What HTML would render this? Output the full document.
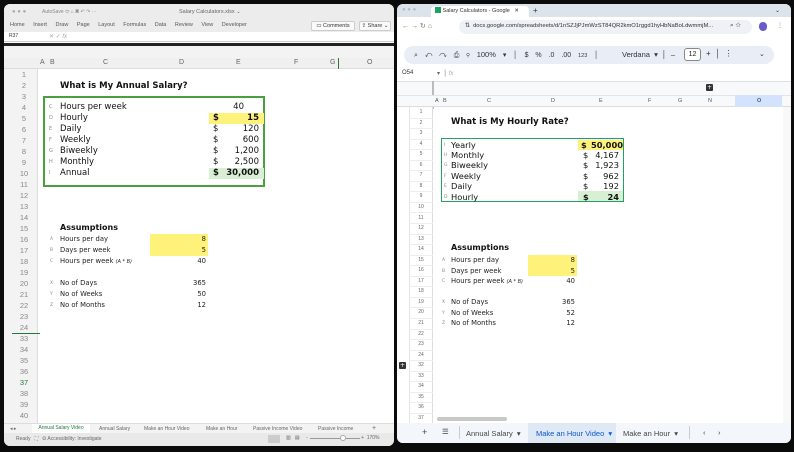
<!DOCTYPE html>
<html><head><meta charset="utf-8"><style>
*{margin:0;padding:0;box-sizing:border-box}
body{width:794px;height:452px;background:#0b0b0b;position:relative;overflow:hidden;font-family:"DejaVu Sans","Liberation Sans",sans-serif;color:#222}
.a{position:absolute;white-space:nowrap}
.t{font-family:"Liberation Sans",sans-serif}
.rn{position:absolute;text-align:center;color:#777;font-family:"Liberation Sans",sans-serif}
</style></head><body>

<!-- LEFT WINDOW -->
<div class="a" style="left:4px;top:4px;width:390px;height:442px;background:#fff;border-radius:6px;overflow:hidden">
 <div class="a" style="left:0;top:0;width:390px;height:38px;background:#ececec"></div>
 <div class="a t" style="left:8px;top:5px;font-size:6px;color:#aaa">● ● ●</div>
 <div class="a t" style="left:38px;top:5px;font-size:5px;color:#888">AutoSave ⬭ ⌂ ▣ ↶ ↷ ⋯</div>
 <div class="a t" style="left:175px;top:5px;font-size:5.5px;color:#666">Salary Calculators.xlsx ⌄</div>
 <div class="a t" style="left:6px;top:18px;font-size:5.5px;color:#555;word-spacing:7px">Home Insert Draw <span>Page&nbsp;Layout</span> Formulas Data Review View Developer</div>
 <div class="a t" style="left:307px;top:17px;width:44px;height:10px;border:1px solid #ccc;border-radius:2px;font-size:5.5px;color:#333;text-align:center;line-height:8px;background:#fafafa">▭ Comments</div>
 <div class="a t" style="left:355px;top:17px;width:32px;height:10px;border:1px solid #ccc;border-radius:2px;font-size:5.5px;color:#333;text-align:center;line-height:8px;background:#fafafa">⇪ Share ⌄</div>
 <div class="a" style="left:0;top:28px;width:390px;height:10px;background:#fff;border-bottom:1px solid #ccc"></div>
 <div class="a t" style="left:5px;top:29px;font-size:5px;color:#333">R37</div>
 <div class="a t" style="left:45px;top:29px;font-size:6px;color:#aaa">✕ ✓ <i>fx</i></div>
 <div class="a" style="left:0;top:39px;width:390px;height:3px;background:#222"></div>
 <div class="a" style="left:0;top:42px;width:390px;height:12px;background:#f3f3f3"></div>
 <!-- col header -->
 <div class="a" style="left:0;top:54px;width:390px;height:11px;background:#f0f0f0;border-bottom:1px solid #ddd"></div>
 <div class="a" style="left:0;top:65px;width:34px;height:360px;background:#f3f3f3;border-right:1px solid #ddd"></div>
 <div class="a" style="left:0;top:54px;width:390px;height:11px;font-size:7px;color:#666;font-family:'Liberation Sans',sans-serif">
  <span class="a" style="left:36px;top:1px">A</span><span class="a" style="left:46px;top:1px">B</span>
  <span class="a" style="left:99px;top:1px">C</span><span class="a" style="left:175px;top:1px">D</span>
  <span class="a" style="left:232px;top:1px">E</span><span class="a" style="left:290px;top:1px">F</span>
  <span class="a" style="left:326px;top:1px">G</span><span class="a" style="left:363px;top:1px">O</span>
  <span class="a" style="left:334px;top:0;width:1px;height:11px;background:#1f7a3b"></span>
 </div>
 <div id="lrows"></div>
 <!-- content -->
 <div class="a" style="left:56px;top:77px;font-size:8.5px;font-weight:bold;color:#111">What is My Annual Salary?</div>
 <div class="a" style="left:39px;top:92px;width:222px;height:91px;border:2px solid #4aa03f"></div>
 <div class="a" style="left:205px;top:109px;width:55px;height:11px;background:#fff27a"></div>
 <div class="a" style="left:205px;top:164px;width:55px;height:11px;background:#d9efd3"></div>
 <div id="lbox"></div>
 <div class="a" style="left:56px;top:219px;font-size:8px;font-weight:bold;color:#111">Assumptions</div>
 <div class="a" style="left:146px;top:230px;width:58px;height:22px;background:#fff27a"></div>
 <div id="lass"></div>
 <!-- tabs -->
 <div class="a t" style="left:0;top:419px;width:390px;height:10px;background:#f3f3f3;border-top:1px solid #ddd;font-size:5px;color:#666">
  <span class="a" style="left:6px;top:2px">◂ ▸</span>
  <span class="a" style="left:28px;top:0;width:58px;height:10px;background:#fff;color:#1f7a3b;text-align:center;line-height:9px;border-bottom:1px solid #1f7a3b">Annual Salary Video</span>
  <span class="a" style="left:95px;top:2px">Annual Salary</span>
  <span class="a" style="left:140px;top:2px">Make an Hour Video</span>
  <span class="a" style="left:202px;top:2px">Make an Hour</span>
  <span class="a" style="left:249px;top:2px">Passive Income Video</span>
  <span class="a" style="left:314px;top:2px">Passive Income</span>
  <span class="a" style="left:368px;top:1px;font-size:7px">+</span>
 </div>
 <div class="a t" style="left:0;top:429px;width:390px;height:13px;background:#e9e9e9;font-size:5px;color:#666">
  <span class="a" style="left:12px;top:3px">Ready &nbsp; ⛶ &nbsp; ⚇ Accessibility: Investigate</span>
  <span class="a" style="left:264px;top:2px;width:12px;height:8px;background:#ccc"></span>
  <span class="a" style="left:282px;top:2px">▥ &nbsp; ▤</span>
  <span class="a" style="left:306px;top:5px;width:50px;height:1px;background:#999"></span>
  <span class="a" style="left:336px;top:2px;width:6px;height:6px;border-radius:3px;background:#fff;border:1px solid #aaa"></span>
  <span class="a" style="left:302px;top:2px">-</span><span class="a" style="left:357px;top:2px">+ &nbsp;170%</span>
 </div>
</div>

<!-- RIGHT WINDOW -->
<div class="a" style="left:397px;top:4px;width:394px;height:439px;background:#fff;border-radius:6px;overflow:hidden">
 <div class="a" style="left:0;top:0;width:394px;height:13px;background:#dde3ea"></div>
 <div class="a t" style="left:5px;top:3px;font-size:6px;color:#bbb">● ● ●</div>
 <div class="a t" style="left:34px;top:2px;width:98px;height:11px;background:#fff;border-radius:4px 4px 0 0;font-size:5.5px;color:#333;line-height:10px;padding-left:4px"><span style="display:inline-block;width:6px;height:6px;background:#1ea362;vertical-align:-1px"></span> Salary Calculators - Google &nbsp;&nbsp;✕</div>
 <div class="a t" style="left:136px;top:2px;font-size:8px;color:#333">+</div>
 <div class="a t" style="left:378px;top:3px;font-size:6px;color:#333">⌄</div>
 <div class="a" style="left:0;top:13px;width:394px;height:21px;background:#fff"></div>
 <div class="a t" style="left:5px;top:18px;font-size:7px;color:#777">← → ↻ ⌂</div>
 <div class="a" style="left:62px;top:16px;width:293px;height:14px;background:#eef1f5;border-radius:7px"></div>
 <div class="a t" style="left:68px;top:19px;font-size:5.8px;color:#333">⇅ &nbsp;docs.google.com/spreadsheets/d/1nSZJjPJmWzST84QR2kmO1rggd1hyHbNaBoLdwmmjM...</div>
 <div class="a t" style="left:333px;top:18px;font-size:6.5px;color:#444">⌕ ☆</div>
 <div class="a" style="left:362px;top:18px;width:8px;height:9px;border-radius:4px;background:#6a5acd"></div>
 <div class="a t" style="left:380px;top:18px;font-size:6px;color:#777">⋮</div>
 <div class="a" style="left:7px;top:42px;width:370px;height:18px;background:#e9eef6;border-radius:9px"></div>
 <div class="a t" style="left:17px;top:46px;font-size:7px;color:#333;word-spacing:5px">⌕ ↶ ↷ ⎙ ⚲ <span style="font-size:7.5px">100%</span> ▾ │ $ % .0 .00 <span style="font-size:5.5px">123</span> │</div>
 <div class="a t" style="left:225px;top:46px;font-size:7.5px;color:#333">Verdana &nbsp;▾ &nbsp;│ &nbsp;–</div>
 <div class="a t" style="left:287px;top:44px;width:17px;height:13px;border:1px solid #888;border-radius:3px;background:#fff;font-size:7px;text-align:center;line-height:11px">12</div>
 <div class="a t" style="left:309px;top:45px;font-size:8px;color:#333">+ &nbsp;│ &nbsp;⋮</div>
 <div class="a t" style="left:362px;top:46px;font-size:7px;color:#333">⌄</div>
 <div class="a t" style="left:5px;top:66px;font-size:6px;color:#333">O54</div>
 <div class="a t" style="left:40px;top:66px;font-size:6px;color:#666">▾ &nbsp;│ <i style="color:#aaa">fx</i></div>
 <div class="a" style="left:0;top:77px;width:394px;height:14px;background:#f8f9fa;border-top:1px solid #e0e0e0"></div>
 <div class="a" style="left:35px;top:77px;width:1.5px;height:28px;background:#bbb"></div>
 <div class="a" style="left:309px;top:80px;width:7px;height:7px;background:#333;border-radius:1px;color:#fff;font-size:6px;line-height:7px;text-align:center">+</div>
 <div class="a" style="left:0;top:91px;width:394px;height:12px;background:#f8f9fa;border-bottom:1px solid #ddd;border-top:1px solid #e4e4e4"></div>
 <div class="a" style="left:338px;top:91px;width:47px;height:12px;background:#d3e3fd"></div>
 <div class="a t" style="left:0;top:91px;width:394px;height:12px;font-size:5.5px;color:#555">
  <span class="a" style="left:38px;top:3px">A</span><span class="a" style="left:46px;top:3px">B</span>
  <span class="a" style="left:90px;top:3px">C</span><span class="a" style="left:154px;top:3px">D</span>
  <span class="a" style="left:202px;top:3px">E</span><span class="a" style="left:251px;top:3px">F</span>
  <span class="a" style="left:281px;top:3px">G</span><span class="a" style="left:311px;top:3px">N</span>
  <span class="a" style="left:360px;top:3px;font-weight:bold">O</span>
 </div>
 <div class="a" style="left:12px;top:103px;width:24px;height:316px;background:#fff;border-left:1px solid #e4e4e4;border-right:1px solid #ddd"></div>
 <div class="a" style="left:2px;top:358px;width:7px;height:7px;background:#333;border-radius:1px;color:#fff;font-size:6px;line-height:7px;text-align:center">+</div>
 <div id="rrows"></div>
 <div class="a" style="left:54px;top:113px;font-size:8.5px;font-weight:bold;color:#111">What is My Hourly Rate?</div>
 <div class="a" style="left:44px;top:134px;width:183px;height:64px;border:1.5px solid #1ea362"></div>
 <div class="a" style="left:181px;top:136px;width:45px;height:10px;background:#fff27a"></div>
 <div class="a" style="left:181px;top:187px;width:45px;height:10px;background:#d9efd3"></div>
 <div id="rbox"></div>
 <div class="a" style="left:54px;top:239px;font-size:8px;font-weight:bold;color:#111">Assumptions</div>
 <div class="a" style="left:131px;top:251px;width:49px;height:21px;background:#fff27a"></div>
 <div id="rass"></div>
 <div class="a" style="left:386px;top:103px;width:8px;height:316px;background:#f8f8f8"></div>
 <div class="a" style="left:40px;top:413px;width:70px;height:4px;background:#c8c8c8;border-radius:2px"></div>
 <div class="a t" style="left:0;top:419px;width:394px;height:20px;background:#f3f6fb;font-size:7.5px;color:#444">
  <span class="a" style="left:25px;top:4px;font-size:9px">+</span>
  <span class="a" style="left:45px;top:4px">☰</span>
  <span class="a" style="left:62px;top:3px;width:1px;height:13px;background:#ccc"></span>
  <span class="a" style="left:69px;top:6px">Annual Salary &nbsp;▾</span>
  <span class="a" style="left:131px;top:0;width:88px;height:20px;background:#dfe8f5;color:#0b57d0;padding:6px 0 0 8px">Make an Hour Video &nbsp;▾</span>
  <span class="a" style="left:226px;top:6px">Make an Hour &nbsp;▾</span>
  <span class="a" style="left:292px;top:3px;width:1px;height:13px;background:#ccc"></span>
  <span class="a" style="left:306px;top:5px">‹ &nbsp;&nbsp;&nbsp;&nbsp; ›</span>
 </div>
</div>

<script>
function add(id,h){document.getElementById(id).outerHTML=h;}
// left rows
var s='',nums=[];for(var i=1;i<=24;i++)nums.push(i);for(i=33;i<=41;i++)nums.push(i);
nums.forEach(function(n,k){var y=65+k*11;s+='<div class="rn" style="left:8px;top:'+y+'px;width:24px;font-size:7.5px;line-height:11px;color:'+(n==37?'#1f7a3b':'#888')+'">'+n+'</div>';});
s+='<div class="a" style="left:8px;top:329px;width:28px;height:1px;background:#1f7a3b"></div>';
add('lrows',s);
var L=[['C','Hours per week','','40',0],['D','Hourly','$','15',1],['E','Daily','$','120',0],['F','Weekly','$','600',0],['G','Biweekly','$','1,200',0],['H','Monthly','$','2,500',0],['I','Annual','$','30,000',1]];
s='';L.forEach(function(r,k){var y=98+k*11;var b=r[4]?'font-weight:bold;':'';
s+='<div class="a" style="left:45px;top:'+(y+2)+'px;font-size:5px;color:#888">'+r[0]+'</div>';
s+='<div class="a" style="left:56px;top:'+y+'px;font-size:8.5px;color:#111;line-height:11px">'+r[1]+'</div>';
s+='<div class="a" style="left:209px;top:'+y+'px;font-size:8.5px;color:#111;line-height:11px;'+b+'">'+r[2]+'</div>';
s+='<div class="a" style="right:'+(k==0?150:135)+'px;top:'+y+'px;font-size:8.5px;color:#111;line-height:11px;'+b+'">'+r[3]+'</div>';});
add('lbox',s);
var A=[['A','Hours per day','8',230],['B','Days per week','5',241],['C','Hours per week <i style="font-size:5px">(A * B)</i>','40',252],['X','No of Days','365',274],['Y','No of Weeks','50',285],['Z','No of Months','12',296]];
s='';A.forEach(function(r){var y=r[3];
s+='<div class="a" style="left:46px;top:'+(y+3)+'px;font-size:4.5px;color:#888">'+r[0]+'</div>';
s+='<div class="a" style="left:56px;top:'+y+'px;font-size:6.8px;color:#222;line-height:11px">'+r[1]+'</div>';
s+='<div class="a" style="right:188px;top:'+y+'px;font-size:6.8px;color:#222;line-height:11px">'+r[2]+'</div>';});
add('lass',s);
// right rows
s='';nums=[];for(i=1;i<=24;i++)nums.push(i);[32,33,34,35,36,37].forEach(function(n){nums.push(n)});
nums.forEach(function(n,k){var y=103+k*10.55;s+='<div class="rn" style="left:12px;top:'+y+'px;width:24px;font-size:5px;line-height:10.5px;color:#666;border-bottom:1px solid #eee">'+n+'</div>';});
add('rrows',s);
var R=[['I','Yearly','$','50,000',1],['H','Monthly','$','4,167',0],['G','Biweekly','$','1,923',0],['F','Weekly','$','962',0],['E','Daily','$','192',0],['D','Hourly','$','24',1]];
s='';R.forEach(function(r,k){var y=135.5+k*10.4;var b=r[4]?'font-weight:bold;':'';
s+='<div class="a" style="left:47px;top:'+(y+3)+'px;font-size:4.5px;color:#888">'+r[0]+'</div>';
s+='<div class="a" style="left:54px;top:'+y+'px;font-size:8.3px;color:#111;line-height:10.4px">'+r[1]+'</div>';
s+='<div class="a" style="left:'+(k==0?184:186)+'px;top:'+y+'px;font-size:8.3px;color:#111;line-height:10.4px;'+b+'">'+r[2]+'</div>';
s+='<div class="a" style="right:'+(k==0?168:172)+'px;top:'+y+'px;font-size:8.3px;color:#111;line-height:10.4px;'+b+'">'+r[3]+'</div>';});
add('rbox',s);
A=[['A','Hours per day','8',251],['B','Days per week','5',261.5],['C','Hours per week <i style="font-size:5px">(A * B)</i>','40',272],['X','No of Days','365',293],['Y','No of Weeks','52',303.5],['Z','No of Months','12',314]];
s='';A.forEach(function(r){var y=r[3];
s+='<div class="a" style="left:45px;top:'+(y+3)+'px;font-size:4.5px;color:#888">'+r[0]+'</div>';
s+='<div class="a" style="left:54px;top:'+y+'px;font-size:6.8px;color:#222;line-height:10.5px">'+r[1]+'</div>';
s+='<div class="a" style="right:216px;top:'+y+'px;font-size:6.8px;color:#222;line-height:10.5px">'+r[2]+'</div>';});
add('rass',s);
</script>
</body></html>
